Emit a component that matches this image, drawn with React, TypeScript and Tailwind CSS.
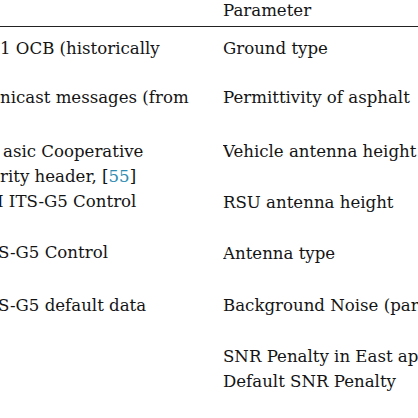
const serif = { fontFamily: '"DejaVu Serif", "Liberation Serif", serif' };

// line within a cell: fixed 25px line box, nudged down by the gap before it
function Line({ mt, className, children }: { mt: string; className?: string; children: React.ReactNode }) {
  return <div className={`h-[25px] leading-[25px] whitespace-nowrap ${mt} ${className ?? ''}`}>{children}</div>;
}

export default function App() {
  return (
    <div
      className="w-[418px] h-[418px] overflow-hidden bg-white text-[#141414] text-[16.6px]"
      style={serif}
    >
      {/* Header */}
      <div className="h-[27px] border-b border-[#222] flex">
        <div className="w-[223px] shrink-0" />
        <div className="-mt-[2px] h-[25px] leading-[25px] whitespace-nowrap">Parameter</div>
      </div>

      <div className="flex">
        {/* Left column (clipped by the crop) */}
        <div className="w-[223px] shrink-0 overflow-hidden flex flex-col">
          <Line mt="mt-[9px]">1 OCB (historically</Line>
          <Line mt="mt-[24px]">nicast messages (from</Line>
          <Line mt="mt-[29px]" className="pl-[3px]">asic Cooperative</Line>
          <Line mt="mt-0">
            rity header, [<span className="text-[#2f8db3]">55</span>]
          </Line>
          <Line mt="mt-0" className="-ml-[3px]">I ITS-G5 Control</Line>
          <Line mt="mt-[26px]" className="-ml-[2px]">S-G5 Control</Line>
          <Line mt="mt-[28px]" className="-ml-[2px]">S-G5 default data</Line>
        </div>

        {/* Parameter column */}
        <div className="flex-1 min-w-0 overflow-hidden flex flex-col">
          <Line mt="mt-[9px]">Ground type</Line>
          <Line mt="mt-[24px]">Permittivity of asphalt</Line>
          <Line mt="mt-[29px]">Vehicle antenna height</Line>
          <Line mt="mt-[26px]">RSU antenna height</Line>
          <Line mt="mt-[26px]">Antenna type</Line>
          <Line mt="mt-[27px]">Background Noise (parameter)</Line>
          <Line mt="mt-[26px]">SNR Penalty in East approach</Line>
          <Line mt="mt-0">Default SNR Penalty</Line>
        </div>
      </div>
    </div>
  );
}
